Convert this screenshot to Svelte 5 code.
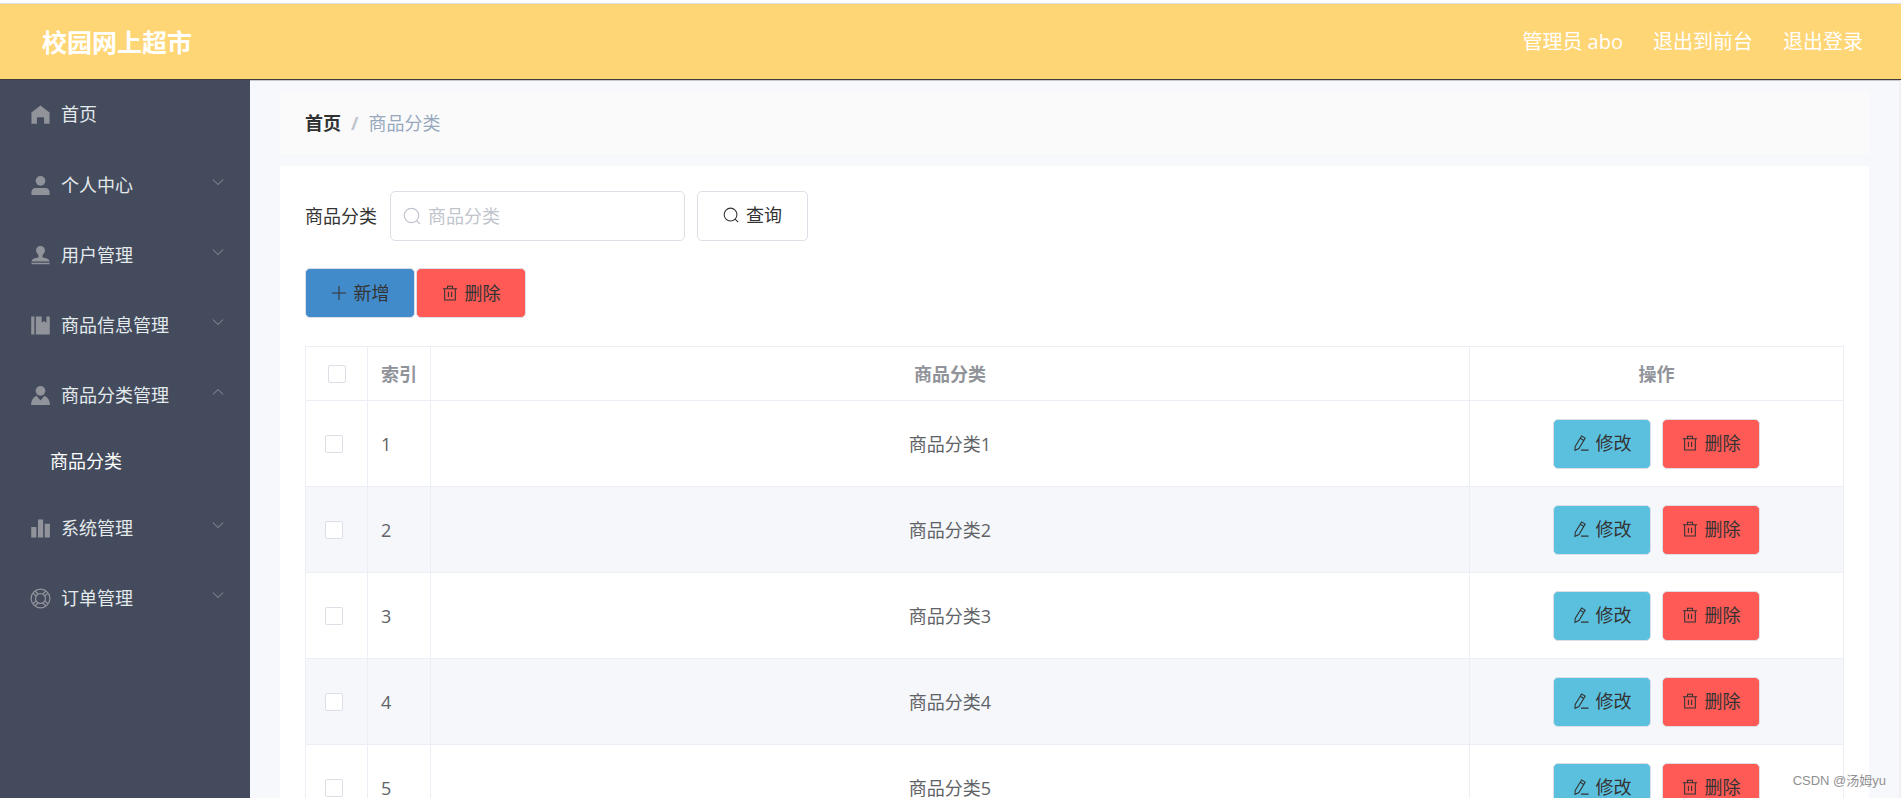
<script>
  let keyword = $state("");
  let checked = $state([]);
  let menus = $state([
    { name: "个人中心", icon: "user", open: false, children: [] },
    { name: "用户管理", icon: "stamp", open: false, children: [] },
    { name: "商品信息管理", icon: "book", open: false, children: [] },
    { name: "商品分类管理", icon: "person", open: true, children: ["商品分类"] },
    { name: "系统管理", icon: "chart", open: false, children: [] },
    { name: "订单管理", icon: "help", open: false, children: [] },
  ]);

  const rows = [1, 2, 3, 4, 5].map((id) => ({ id, name: "商品分类" + id }));

  function toggleAll(e) {
    checked = e.target.checked ? rows.map((row) => row.id) : [];
  }
</script>

{#snippet icon(name)}
  <svg class="icon" viewBox="0 0 18 18" aria-hidden="true">
    {#if name === "home"}
      <path class="fill" d="M9 0.5 17.6 7v10.8h-5.2v-5.2c0-.6-.4-1-1-1H6.6c-.6 0-1 .4-1 1v5.2H.4V7z" />
    {:else if name === "user"}
      <circle class="fill" cx="9" cy="4.6" r="4.6" />
      <path class="fill" d="M.4 18v-2.6c0-2.4 1.6-4 4-4h9.2c2.4 0 4 1.6 4 4V18z" />
    {:else if name === "stamp"}
      <path class="fill" d="M7 11c.4-1.800-.2-2.800-1-3.800C3.400 4.400 5.200 0 9 0s5.600 4.400 3 7.200c-.8 1-1.400 2-1 3.800 3.900.3 6.200 1.600 6.600 3.600H.4C.8 12.600 3.100 11.300 7 11zM.4 15.800h17.200v1.600H.4z" />
    {:else if name === "book"}
      <path class="fill" d="M.2.5h3v17h-3zM4.600.5h5.600v6l2.200-1.800 2.200 1.800v-6h3.200v17H4.600z" />
    {:else if name === "person"}
      <circle class="fill" cx="9" cy="4.600" r="4.600" />
      <path class="fill" d="M0 18c.1-4.400 2-7.500 5.200-8.800L9 13.700l3.800-4.500C16 10.500 17.900 13.600 18 18z" />
    {:else if name === "chart"}
      <path class="fill" d="M.2 7.500h4.900v10H.2zM6.600.5h4.900v17H6.600zM13 4.500h4.900v13H13z" />
    {:else if name === "help"}
      <circle cx="9" cy="9" r="8.900" />
      <circle cx="9" cy="9" r="4.700" />
      <path d="M3.800 1.900 6.800 4.800M1.900 3.800 4.800 6.800M14.200 1.900l-3 2.900M16.100 3.800l-2.900 3M3.800 16.100l3-2.900M1.900 14.200l2.900-3M14.200 16.100l-3-2.900M16.100 14.200l-2.900-3" />
    {:else if name === "search"}
      <circle cx="8.500" cy="8.500" r="7.200" />
      <path d="M13.600 13.600 17 17" />
    {:else if name === "plus"}
      <path d="M9 1v16M1 9h16" />
    {:else if name === "delete"}
      <path d="M1 4.200h16M6.200 4V1.500h5.600V4M3 4.500v12.300h12V4.500M7.200 7.500v6M10.800 7.500v6" />
    {:else if name === "edit"}
      <path d="M9.700 1.200 13.700 3.500 6.700 15.200 2.200 17.200 2.500 12.800zM8.200 3.700l4 2.400M9 17h8.500" />
    {/if}
  </svg>
{/snippet}

<div class="page">
  <header class="header">
    <h1>校园网上超市</h1>
    <nav class="account">
      <span>管理员 abo</span>
      <a href="#front">退出到前台</a>
      <a href="#logout">退出登录</a>
    </nav>
  </header>

  <div class="container">
    <aside class="sidebar">
      <a class="menu-item home" href="#home">
        {@render icon("home")}
        <span>首页</span>
      </a>
      {#each menus as menu}
        <button class="menu-item" aria-expanded={menu.open} onclick={() => (menu.open = !menu.open)}>
          {@render icon(menu.icon)}
          <span>{menu.name}</span>
          <svg class="arrow" class:open={menu.open} viewBox="0 0 12 8" aria-hidden="true">
            <path d="M.8 1.500 6 6.500 11.200 1.500" />
          </svg>
        </button>
        {#if menu.open}
          {#each menu.children as child}
            <a class="sub-item" href="#category">{child}</a>
          {/each}
        {/if}
      {/each}
    </aside>

    <main class="main">
      <nav class="breadcrumb">
        <a href="#home">首页</a>
        <span class="separator">/</span>
        <span>商品分类</span>
      </nav>

      <section class="card">
        <form class="search-form" onsubmit={(e) => e.preventDefault()}>
          <label for="keyword">商品分类</label>
          <div class="search-input">
            {@render icon("search")}
            <input id="keyword" type="text" placeholder="商品分类" bind:value={keyword} />
          </div>
          <button class="btn query" type="submit">{@render icon("search")}查询</button>
        </form>

        <div class="toolbar">
          <button class="btn wide add">{@render icon("plus")}新增</button>
          <button class="btn wide delete">{@render icon("delete")}删除</button>
        </div>

        <table>
          <colgroup>
            <col class="col-check" />
            <col class="col-index" />
            <col />
            <col class="col-action" />
          </colgroup>
          <thead>
            <tr>
              <th class="center">
                <input type="checkbox" aria-label="全选" checked={checked.length === rows.length} onchange={toggleAll} />
              </th>
              <th>索引</th>
              <th class="center">商品分类</th>
              <th class="center">操作</th>
            </tr>
          </thead>
          <tbody>
            {#each rows as row}
              <tr>
                <td class="check"><input type="checkbox" aria-label={row.name} value={row.id} bind:group={checked} /></td>
                <td>{row.id}</td>
                <td class="center">{row.name}</td>
                <td>
                  <div class="actions">
                    <button class="btn edit">{@render icon("edit")}修改</button>
                    <button class="btn delete">{@render icon("delete")}删除</button>
                  </div>
                </td>
              </tr>
            {/each}
          </tbody>
        </table>
      </section>
    </main>
  </div>
  <div class="watermark">CSDN @汤姆yu</div>
</div>

<style>
  :global(body) {
    margin: 0;
    background: #fff;
  }
  .page {
    display: flex;
    flex-direction: column;
    height: 100vh;
    overflow: hidden;
    box-sizing: border-box;
    padding-top: 3px;
    font-family: "Open Sans", "Noto Sans CJK SC", sans-serif;
    font-size: 18px;
    line-height: 24px;
    color: #333;
  }
  .page * {
    box-sizing: border-box;
  }
  a {
    color: inherit;
    text-decoration: none;
  }
  button,
  input {
    font: inherit;
    color: inherit;
  }
  button {
    cursor: pointer;
  }
  .icon {
    flex: none;
    width: 18px;
    height: 18px;
    fill: none;
    stroke: currentColor;
    stroke-width: 1.2;
    overflow: visible;
  }
  .icon .fill {
    fill: currentColor;
    stroke: none;
  }

  .header {
    display: flex;
    flex: none;
    align-items: center;
    justify-content: space-between;
    height: 77px;
    padding: 0 38px 0 42px;
    background: #ffd676;
    border-top: 1px solid #dcdfe6;
    border-bottom: 1px solid #443c3a;
    color: #fff;
  }
  h1 {
    margin: 0;
    font-size: 25px;
    line-height: 32px;
    font-weight: 700;
  }
  .account {
    display: flex;
    gap: 30px;
    font-size: 20px;
  }

  .container {
    display: flex;
    flex: 1;
    min-height: 0;
  }
  .sidebar {
    display: flex;
    flex: none;
    flex-direction: column;
    width: 250px;
    background: #434b5d;
    color: #e4eaec;
  }
  .menu-item {
    display: flex;
    flex: none;
    align-items: center;
    gap: 11px;
    height: 70px;
    padding: 0 26px 2px 31px;
    border: 0;
    background: none;
    text-align: left;
  }
  .menu-item.home {
    margin-bottom: 1px;
  }
  .menu-item .icon {
    width: 19px;
    height: 19px;
    color: #909399;
  }
  .arrow {
    width: 12px;
    height: 8px;
    margin: 0 0 7px auto;
    fill: none;
    stroke: #909399;
  }
  .arrow.open {
    transform: rotate(180deg);
  }
  .sub-item {
    flex: none;
    padding: 0 0 3px 50px;
    line-height: 60px;
    color: #fff;
  }

  .main {
    flex: 1;
    min-width: 0;
    padding: 10px 30px 0;
    overflow: hidden;
    background: #f7f8fb;
    border-top: 1px solid #c8c9cc;
    border-right: 2px solid #f1f1f1;
  }
  .breadcrumb {
    display: flex;
    align-items: center;
    gap: 10px;
    height: 63px;
    margin-bottom: 12px;
    padding: 0 25px;
    background: #fafafa;
    color: #97a8be;
  }
  .breadcrumb a {
    font-weight: 700;
    color: #303133;
  }
  .separator {
    font-weight: 700;
    color: #c0c4cc;
  }

  .card {
    padding: 25px;
    background: #fff;
  }
  .search-form {
    display: flex;
    align-items: center;
  }
  .search-input {
    display: flex;
    align-items: center;
    gap: 7px;
    width: 295px;
    height: 50px;
    margin: 0 12px 0 13px;
    padding: 0 12px;
    border: 1px solid #dcdfe6;
    border-radius: 5px;
    color: #c0c4cc;
  }
  .search-input input {
    flex: 1;
    min-width: 0;
    padding: 0;
    border: 0;
    outline: 0;
    background: none;
    color: #606266;
  }
  .search-input input::placeholder {
    color: #c0c4cc;
    opacity: 1;
  }
  .btn {
    display: flex;
    align-items: center;
    justify-content: center;
    gap: 7px;
    width: 98px;
    height: 50px;
    padding: 0 0 1px;
    border: 1px solid #dcdfe6;
    border-radius: 5px;
    background: #fff;
    color: #333;
  }
  .btn .icon {
    width: 16px;
    height: 16px;
  }
  .btn.query,
  .btn.wide {
    width: 110px;
  }
  .btn.query {
    width: 111px;
    padding-bottom: 3px;
  }
  .btn.add {
    background: #428bca;
  }
  .btn.edit {
    background: #5bc0de;
  }
  .btn.delete {
    background: #ff5a56;
  }
  .toolbar {
    display: flex;
    gap: 1px;
    margin: 27px 0 28px;
  }

  table {
    width: 100%;
    table-layout: fixed;
    border-collapse: collapse;
    color: #606266;
  }
  .col-check {
    width: 62px;
  }
  .col-index {
    width: 63px;
  }
  .col-action {
    width: 374px;
  }
  th,
  td {
    padding: 0 13px;
    border: 1px solid #ebeef5;
    text-align: left;
  }
  th {
    height: 54px;
    color: #909399;
    font-weight: 700;
  }
  td {
    height: 86px;
  }
  tbody tr:nth-child(even) {
    background: #f5f7fb;
  }
  .center {
    text-align: center;
  }
  td.check {
    padding-left: 19px;
  }
  .actions {
    display: flex;
    justify-content: center;
    gap: 11px;
  }
  input[type="checkbox"] {
    appearance: none;
    display: block;
    width: 18px;
    height: 18px;
    margin: 0;
    border: 1px solid #dcdfe6;
    border-radius: 2px;
    background: #fff;
  }
  th input[type="checkbox"] {
    margin: 0 auto;
  }
  input[type="checkbox"]:checked {
    background: #409eff;
    border-color: #409eff;
  }

  .watermark {
    position: absolute;
    right: 15px;
    bottom: 6px;
    font-family: "Liberation Sans", "Noto Sans CJK SC", sans-serif;
    font-size: 13px;
    line-height: 22px;
    color: #909090;
    text-shadow: 0 0 1px #fff;
  }
</style>
